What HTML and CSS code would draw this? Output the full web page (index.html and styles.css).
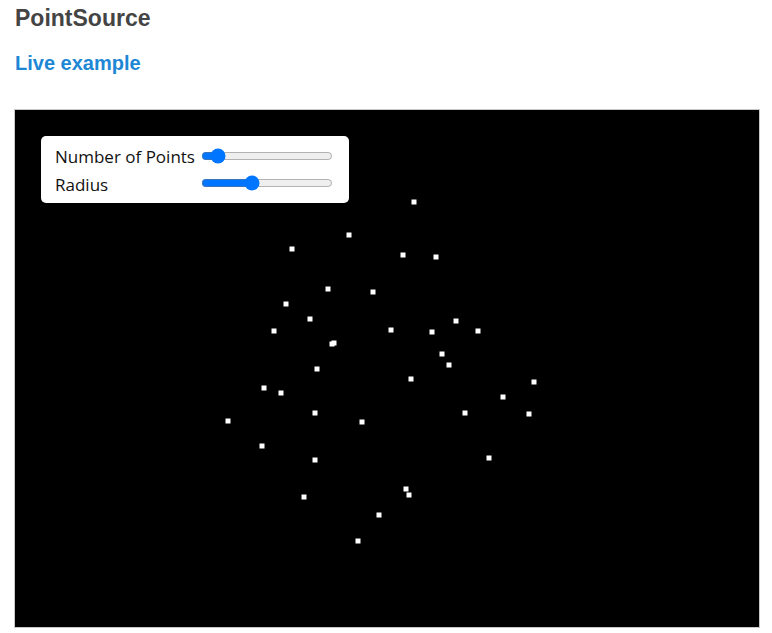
FILE: index.html
```html
<!DOCTYPE html>
<html lang="en">
<head>
    <meta charset="UTF-8">
    <meta name="viewport" content="width=device-width, initial-scale=1.0">
    <title>PointSource</title>
    <link rel="stylesheet" href="styles.css">
</head>
<body>

<h1 class="page-title">PointSource</h1>
<h2 class="sub-title">Live example</h2>

<!-- Render window with its control panel -->
<div class="render-view">
    <table class="control-panel">
        <tr>
            <td class="label">Number of Points</td>
            <td><input class="slider" type="range" min="1" max="500" value="38"></td>
        </tr>
        <tr>
            <td class="label">Radius</td>
            <td><input class="slider" type="range" min="0" max="100" value="37"></td>
        </tr>
    </table>

    <svg class="points" width="744" height="517" viewBox="0 0 744 517">
        <g fill="#fff" transform="translate(-0.5 -0.5)">
            <rect x="397" y="90" width="5" height="5"/>
            <rect x="332" y="123" width="5" height="5"/>
            <rect x="275" y="137" width="5" height="5"/>
            <rect x="386" y="143" width="5" height="5"/>
            <rect x="419" y="145" width="5" height="5"/>
            <rect x="311" y="177" width="5" height="5"/>
            <rect x="356" y="180" width="5" height="5"/>
            <rect x="269" y="192" width="5" height="5"/>
            <rect x="293" y="207" width="5" height="5"/>
            <rect x="439" y="209" width="5" height="5"/>
            <rect x="257" y="219" width="5" height="5"/>
            <rect x="374" y="218" width="5" height="5"/>
            <rect x="415" y="220" width="5" height="5"/>
            <rect x="461" y="219" width="5" height="5"/>
            <rect x="315" y="232" width="5" height="5"/>
            <rect x="317" y="231" width="5" height="5"/>
            <rect x="425" y="242" width="5" height="5"/>
            <rect x="432" y="253" width="5" height="5"/>
            <rect x="300" y="257" width="5" height="5"/>
            <rect x="394" y="267" width="5" height="5"/>
            <rect x="517" y="270" width="5" height="5"/>
            <rect x="247" y="276" width="5" height="5"/>
            <rect x="264" y="281" width="5" height="5"/>
            <rect x="486" y="285" width="5" height="5"/>
            <rect x="298" y="301" width="5" height="5"/>
            <rect x="448" y="301" width="5" height="5"/>
            <rect x="512" y="302" width="5" height="5"/>
            <rect x="211" y="309" width="5" height="5"/>
            <rect x="345" y="310" width="5" height="5"/>
            <rect x="245" y="334" width="5" height="5"/>
            <rect x="298" y="348" width="5" height="5"/>
            <rect x="472" y="346" width="5" height="5"/>
            <rect x="389" y="377" width="5" height="5"/>
            <rect x="392" y="383" width="5" height="5"/>
            <rect x="287" y="385" width="5" height="5"/>
            <rect x="362" y="403" width="5" height="5"/>
            <rect x="341" y="429" width="5" height="5"/>
        </g>
    </svg>
</div>

</body>
</html>
```

FILE: styles.css
```css
body {
    margin: 0;
    padding: 0 12px 0 14px;
    font-family: "Liberation Sans", Arial, sans-serif;
    background-color: #fff;
    color: #444;
}
.page-title {
    margin: 0;
    padding: 7px 0 0 1px;
    font-size: 23px;
    line-height: 23px;
    font-weight: bold;
    color: #444;
}
.sub-title {
    margin: 23px 0 0;
    padding-left: 1px;
    font-size: 20px;
    line-height: 20px;
    font-weight: bold;
    color: #1e87d5;
}
.render-view {
    position: relative;
    margin-top: 36px;
    width: 744px;
    height: 517px;
    background-color: #000;
    border: 1px solid #c8c8c8;
}
.points {
    display: block;
}
/* floating panel over the render window */
.control-panel {
    position: absolute;
    left: 26px;
    top: 26px;
    width: 308px;
    height: 67px;
    box-sizing: border-box;
    padding: 7px 16px 5px 12px;
    background: #fff;
    border-radius: 5px;
    border-spacing: 0;
    font-family: "Open Sans", "Noto Sans", sans-serif;
    font-size: 17px;
    color: #111;
}
.control-panel td {
    padding: 0;
    height: 27px;
}
.control-panel .label {
    width: 146px;
    padding-left: 2px;
}
.slider {
    display: block;
    width: 132px;
    margin: -2px 0 0;
    accent-color: #0075ff;
}
```
